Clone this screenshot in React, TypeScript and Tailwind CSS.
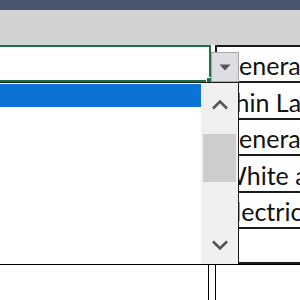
import React from "react";

const cells = [
  { text: "General", cls: "h-[38px] border-t-2" },
  { text: "Thin Latex", cls: "h-[37px]" },
  { text: "General", cls: "h-[36px]" },
  { text: "White and Black", cls: "h-[37px]" },
  { text: "Electrical", cls: "h-[36px]" },
  { text: "", cls: "h-[35px] border-b-0" },
];

function Chevron({ up }: { up?: boolean }) {
  return (
    <svg width="18" height="11" viewBox="0 0 18 11">
      <polyline
        points={up ? "2,9.5 9,2.5 16,9.5" : "2,1.5 9,8.5 16,1.5"}
        fill="none"
        stroke="#555"
        strokeWidth="2.6"
      />
    </svg>
  );
}

export default function App() {
  return (
    <div className="relative w-[300px] h-[300px] overflow-hidden bg-white font-['Lato',sans-serif] text-[#111]">
      <div className="h-[10px] bg-[#4a566e]" />
      <div className="h-[35px] bg-[#d2d2d2]" />

      {/* sheet rows */}
      <div className="flex">
        <div className="w-[215px] shrink-0" />
        <div className="flex-1 min-w-0 flex flex-col border-l-2 border-[#1a1a1a]">
          {cells.map((c, i) => (
            <div
              key={i}
              className={`flex items-end pl-[4px] pb-[3px] border-b-2 border-[#1a1a1a] whitespace-nowrap overflow-hidden text-[25px] leading-none ${c.cls}`}
            >
              {c.text}
            </div>
          ))}
        </div>
      </div>
      <div className="flex h-[40px] border-t border-black">
        <div className="w-[209px] shrink-0 border-r border-black" />
        <div className="w-[7px] shrink-0 border-r border-black" />
        <div className="flex-1" />
      </div>

      {/* active cell */}
      <div className="absolute left-[-2px] top-[45px] w-[213px] h-[37px] border-2 border-[#1f7145]">
        <div className="absolute right-[-3px] bottom-[-3px] w-[5px] h-[5px] bg-[#1f7145] outline outline-1 outline-white" />
      </div>

      {/* dropdown button */}
      <div className="absolute left-[211px] top-[52px] w-[28px] h-[30px] bg-[#dddee3] border border-[#a6a7ab] flex items-center justify-center">
        <svg width="12" height="7" viewBox="0 0 12 7">
          <polygon points="0.5,0.5 11.5,0.5 6,6.5" fill="#555" />
        </svg>
      </div>

      {/* dropdown list */}
      <div className="absolute left-0 top-[82px] w-[239px] h-[182px] flex bg-white border-t border-r border-[#1a1a1a]">
        <div className="w-[201px] pt-[1px]">
          <div className="h-[23px] bg-[#0a73d5]" />
        </div>
        <div className="w-[37px] bg-[#f0f0f0] flex flex-col items-center">
          <div className="h-[42px] flex items-center justify-center">
            <Chevron up />
          </div>
          <div className="mt-[9px] w-[33px] h-[48px] bg-[#cdcdcd]" />
          <div className="flex-1" />
          <div className="h-[38px] flex items-center justify-center">
            <Chevron />
          </div>
        </div>
      </div>
    </div>
  );
}
